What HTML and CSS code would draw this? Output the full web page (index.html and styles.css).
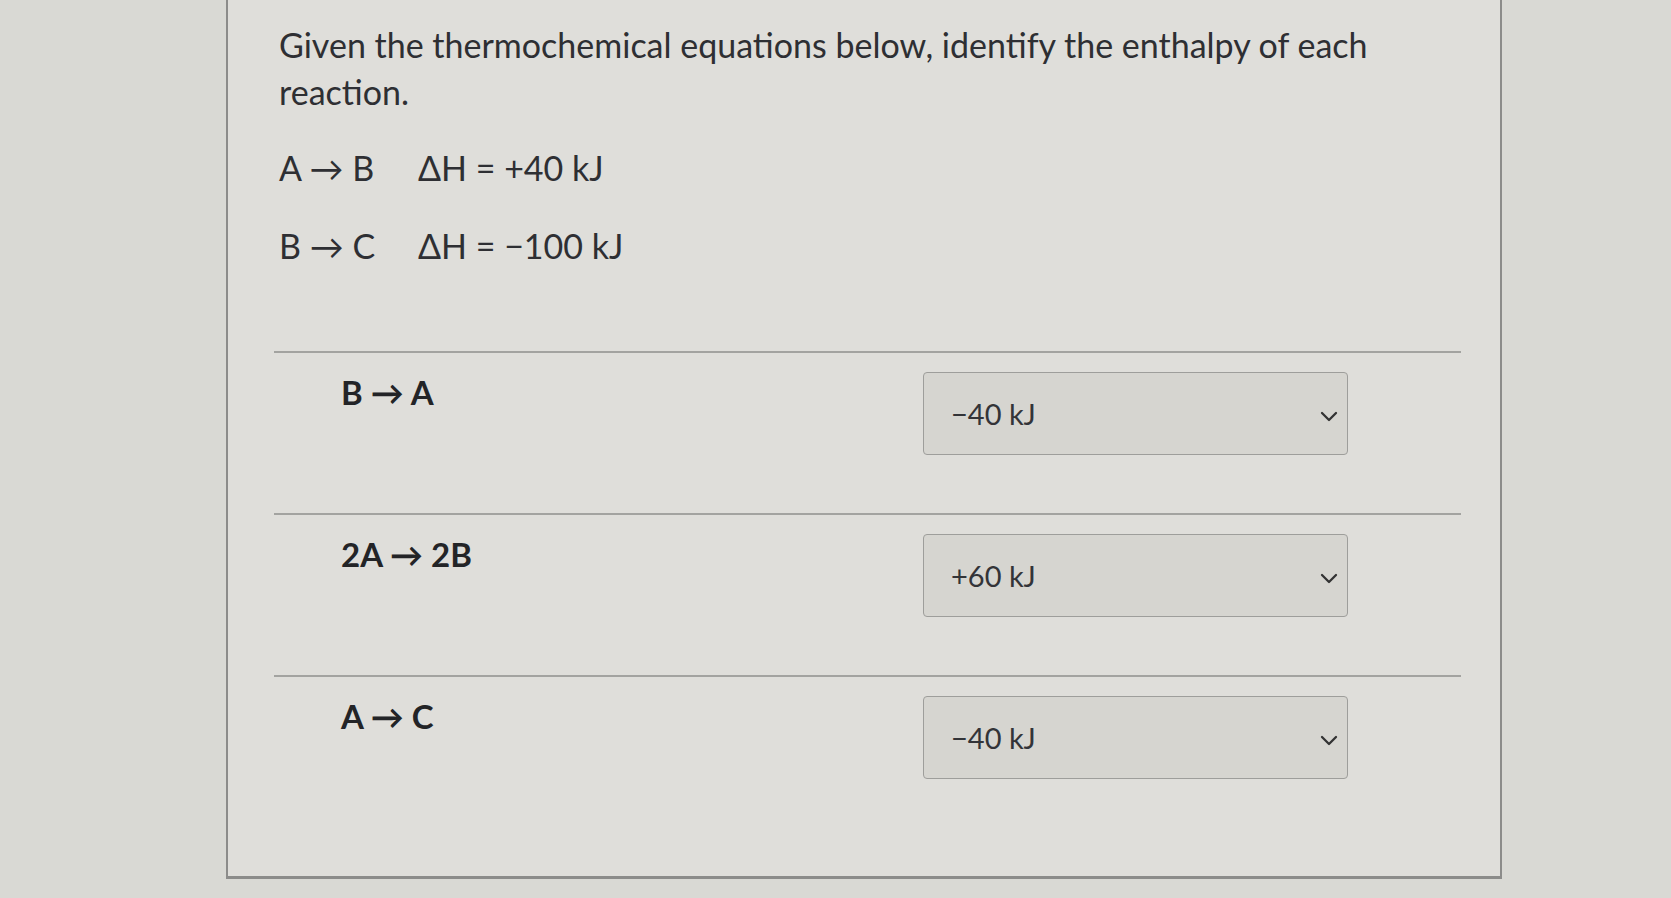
FILE: index.html
```html
<!DOCTYPE html>
<html>
<head>
<meta charset="utf-8">
<link rel="stylesheet" href="styles.css">
</head>
<body>
<div class="page">
  <div class="card">
    <p class="prompt">Given the thermochemical equations below, identify the enthalpy of each reaction.</p>
    <div class="eqs">
      <div class="eq"><span class="rx">A → B</span><span class="dh">ΔH = +40 kJ</span></div>
      <div class="eq"><span class="rx">B → C</span><span class="dh">ΔH = −100 kJ</span></div>
    </div>
    <div class="rows">
      <div class="row">
        <div class="label">B → A</div>
        <div class="select"><span class="val">−40 kJ</span><svg class="chev" viewBox="0 0 18 11" width="18" height="11"><path d="M2 2 L9 9 L16 2" fill="none" stroke="#333" stroke-width="2.3" stroke-linecap="round" stroke-linejoin="round"/></svg></div>
      </div>
      <div class="row">
        <div class="label">2A → 2B</div>
        <div class="select"><span class="val">+60 kJ</span><svg class="chev" viewBox="0 0 18 11" width="18" height="11"><path d="M2 2 L9 9 L16 2" fill="none" stroke="#333" stroke-width="2.3" stroke-linecap="round" stroke-linejoin="round"/></svg></div>
      </div>
      <div class="row">
        <div class="label">A → C</div>
        <div class="select"><span class="val">−40 kJ</span><svg class="chev" viewBox="0 0 18 11" width="18" height="11"><path d="M2 2 L9 9 L16 2" fill="none" stroke="#333" stroke-width="2.3" stroke-linecap="round" stroke-linejoin="round"/></svg></div>
      </div>
    </div>
  </div>
</div>
</body>
</html>
```
FILE: styles.css
```css
html, body {
  margin: 0;
  padding: 0;
  background: #d9d9d4;
  height: 100%;
  overflow: hidden;
}
.page {
  padding-left: 226px;
}
.card {
  width: 1276px;
  height: 879px;
  box-sizing: border-box;
  border-left: 2px solid #8c8c8a;
  border-right: 2px solid #8c8c8a;
  border-bottom: 3px solid #8c8c8a;
  background: #dfdeda;
  padding: 0 0 0 51px;
  font-family: Lato, "Open Sans", sans-serif;
  color: #2e2f33;
}
.prompt {
  margin: 0;
  padding-top: 21px;
  width: 1160px;
  font-size: 34px;
  line-height: 47px;
}
.eqs {
  margin-top: 33px;
}
.eq {
  display: flex;
  font-size: 34px;
  height: 78px;
  line-height: 40px;
}
.rx {
  width: 139px;
}
.rows {
  margin-left: -5px;
  margin-top: 47px;
  width: 1187px;
}
.row {
  border-top: 2px solid #a3a3a0;
  height: 162px;
  box-sizing: border-box;
  display: flex;
  padding-top: 19px;
}
.label {
  width: 582px;
  padding-left: 67px;
  padding-top: 0;
  font-size: 33px;
  font-weight: bold;
  color: #232427;
  line-height: 40px;
}
.select {
  width: 425px;
  height: 83px;
  box-sizing: border-box;
  border: 1.5px solid #9e9e9b;
  border-radius: 4px;
  background: #d6d5d0;
  display: flex;
  align-items: center;
  justify-content: space-between;
  padding: 0 9px 0 27px;
}
.val {
  font-size: 29px;
  color: #333438;
}
.chev {
  margin-top: 6px;
}
```
